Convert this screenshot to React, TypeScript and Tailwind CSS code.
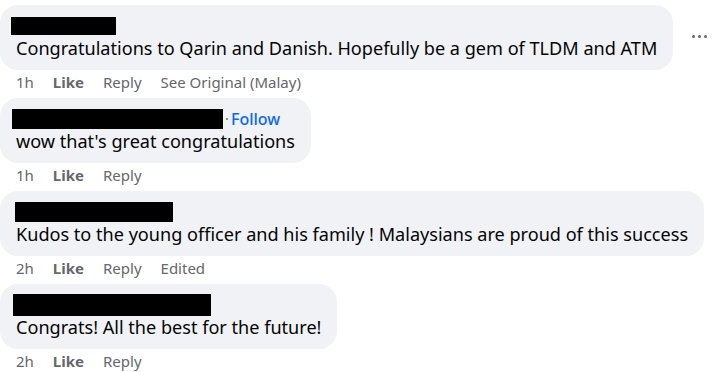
import React from "react";

type C = {
  bar: [number, number, number]; // marginLeft, width, height
  follow?: boolean;
  text: string;
  time: string;
  extra?: string;
  dots?: boolean;
};

const comments: C[] = [
  { bar: [-5, 105, 18], text: "Congratulations to Qarin and Danish. Hopefully be a gem of TLDM and ATM", time: "1h", extra: "See Original (Malay)", dots: true },
  { bar: [-4, 211, 20], follow: true, text: "wow that's great congratulations", time: "1h" },
  { bar: [-1, 158, 20], text: "Kudos to the young officer and his family ! Malaysians are proud of this success", time: "2h", extra: "Edited" },
  { bar: [-3, 198, 22], text: "Congrats! All the best for the future!", time: "2h" },
];

export default function App() {
  return (
    <div
      className="w-[720px] h-[372px] bg-white overflow-hidden pt-[5px]"
      style={{ fontFamily: '"Noto Sans", "Open Sans", sans-serif' }}
    >
      {comments.map((c, i) => (
        <div key={i} className="flex flex-col">
          <div className="flex items-center">
            <div className="bg-[#f0f2f5] rounded-[18px] pl-[16px] pr-[16px] pt-[11px] pb-[9px]">
              <div className="flex items-center h-[20px]">
                <div
                  className="bg-black"
                  style={{ marginLeft: c.bar[0], width: c.bar[1], height: c.bar[2] }}
                />
                {c.follow && (
                  <span className="flex items-center text-[#0866ff] text-[16px] font-medium leading-[20px]">
                    <span className="w-[2px] h-[2px] bg-[#65676b] rounded-full mx-[3px]" />
                    Follow
                  </span>
                )}
              </div>
              <div className="text-[#050505] text-[18.1px] leading-[25px] whitespace-nowrap">{c.text}</div>
            </div>
            {c.dots && (
              <div className="ml-[19px] flex gap-[3px] mt-[-2px]">
                <span className="w-[3px] h-[3px] bg-[#65676b] rounded-full" />
                <span className="w-[3px] h-[3px] bg-[#65676b] rounded-full" />
                <span className="w-[3px] h-[3px] bg-[#65676b] rounded-full" />
              </div>
            )}
          </div>
          <div className="flex items-center gap-[19px] pl-[16px] h-[28px] pb-[3px] text-[15px] text-[#65676b]">
            <span>{c.time}</span>
            <span className="font-bold">Like</span>
            <span>Reply</span>
            {c.extra && <span>{c.extra}</span>}
          </div>
        </div>
      ))}
    </div>
  );
}
